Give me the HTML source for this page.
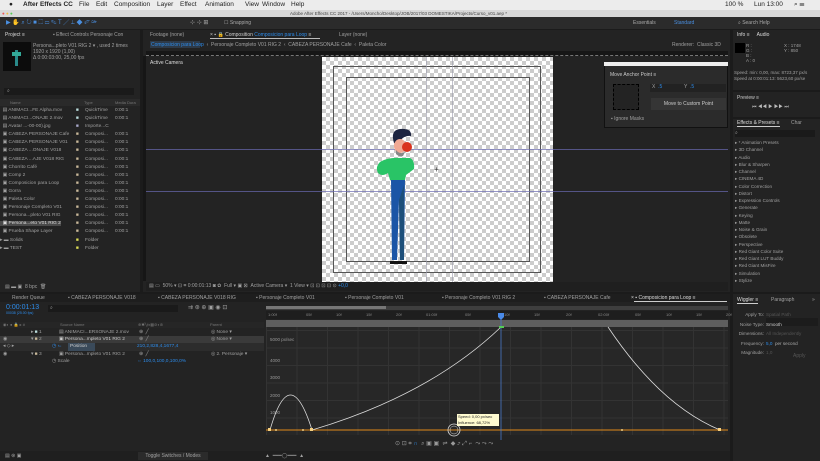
<!DOCTYPE html>
<html><head><meta charset="utf-8"><style>
*{margin:0;padding:0;box-sizing:border-box}
body{width:820px;height:461px;overflow:hidden;background:#1b1b1b;font-family:"Liberation Sans",sans-serif;font-size:5px;color:#a0a0a0;position:relative}
.a{position:absolute;white-space:nowrap}
.p{position:absolute;background:#232323}
.blue{color:#2d8ceb}
.chk{background-color:#fff;background-image:linear-gradient(45deg,#ccc 25%,transparent 25%,transparent 75%,#ccc 75%),linear-gradient(45deg,#ccc 25%,transparent 25%,transparent 75%,#ccc 75%);background-size:8px 8px;background-position:0 0,4px 4px}
</style></head><body>
<div class="a" style="left:0;top:0;width:820px;height:10px;background:#ececec;color:#222;font-size:6.5px;line-height:10px">
<span class="a" style="left:9px">●</span><span class="a" style="left:23px;font-weight:bold">After Effects CC</span>
<span class="a" style="left:79px">File</span><span class="a" style="left:96px">Edit</span><span class="a" style="left:114px">Composition</span><span class="a" style="left:157px">Layer</span><span class="a" style="left:180px">Effect</span><span class="a" style="left:205px">Animation</span><span class="a" style="left:245px">View</span><span class="a" style="left:262px">Window</span><span class="a" style="left:291px">Help</span>
<span class="a" style="left:725px">100 %</span><span class="a" style="left:754px">Lun 13:00</span><span class="a" style="left:794px">⌕ ☰</span></div>
<div class="a" style="left:0;top:10px;width:820px;height:7px;background:#d8d8d8;color:#444;font-size:4.5px;line-height:7px"><span class="a" style="left:2px;color:#e55">● <span style="color:#eb4">●</span> <span style="color:#5c5">●</span></span><span class="a" style="left:290px">Adobe After Effects CC 2017 - /Users/Moncho/Desktop/JOB/2017/03 DOMESTIKA/Projects/Curso_v01.aep *</span></div>
<div class="a" style="left:0;top:17px;width:820px;height:12px;background:#2b2b2b;line-height:12px;font-size:6px;color:#aaa">
<span class="a" style="left:6px;color:#4a8fe0">▶ ✋ ⌕ ↻ ■ ⬚ ▭ ✎ T ╱ ⊥ ◆ ✐ ✑</span><span class="a" style="left:190px">⊹ ⊹ ⊞</span><span class="a" style="left:224px;font-size:5px">☐ Snapping</span>
<span class="a" style="left:633px;font-size:5px">Essentials</span><span class="a" style="left:674px;font-size:5px;color:#4a8fe0">Standard</span><span class="a" style="left:738px;font-size:5px">⌕ Search Help</span></div>
<div class="p" style="left:0;top:30px;width:140px;height:262px"></div>
<div class="a" style="left:5px;top:32px;color:#ddd">Project ≡</div><div class="a" style="left:53px;top:32px">▪ Effect Controls Personaje Con</div>
<div class="a" style="left:3px;top:42px;width:28px;height:29px;background:#0c0c0c"><div class="a" style="left:12px;top:8px;width:3px;height:16px;background:#2a8a8a"></div><div class="a" style="left:9px;top:10px;width:9px;height:4px;background:#3a9"></div></div>
<div class="a" style="left:33px;top:43px;line-height:6px">Persona...pleto V01 RIG 2 ▾ , used 2 times<br>1920 x 1920 (1,00)<br>Δ 0:00:03:00, 25,00 fps</div>
<div class="a" style="left:4px;top:88px;width:130px;height:7px;background:#1a1a1a;padding-left:3px">⌕</div>
<div class="a" style="left:0;top:99px;width:140px;height:7px;background:#2a2a2a;font-size:4px;line-height:7px;color:#777"><span class="a" style="left:10px">Name</span><span class="a" style="left:84px">Type</span><span class="a" style="left:115px">Media Dura</span></div>
<div class="a" style="left:0;top:107px;line-height:8.1px;font-size:4.8px;width:140px">
<div style="position:relative;height:8.1px">&nbsp;&nbsp;▤ ANIMACI...FE Alpha.mov <span class="a" style="left:76px;color:#bdd">■</span><span class="a" style="left:85px">QuickTime</span><span class="a" style="left:115px">0:00:1</span></div>
<div style="position:relative;height:8.1px">&nbsp;&nbsp;▤ ANIMACI...ONAJE 2.mov <span class="a" style="left:76px;color:#bdd">■</span><span class="a" style="left:85px">QuickTime</span><span class="a" style="left:115px">0:00:1</span></div>
<div style="position:relative;height:8.1px">&nbsp;&nbsp;▤ Avatar ...-00-00).jpg <span class="a" style="left:76px;color:#aac">■</span><span class="a" style="left:85px">Importe...C</span></div>
<div style="position:relative;height:8.1px">&nbsp;&nbsp;▣ CABEZA PERSONAJE Cafe <span class="a" style="left:76px;color:#c9b99a">■</span><span class="a" style="left:85px">Composi...</span><span class="a" style="left:115px">0:00:1</span></div>
<div style="position:relative;height:8.1px">&nbsp;&nbsp;▣ CABEZA PERSONAJE V01 <span class="a" style="left:76px;color:#c9b99a">■</span><span class="a" style="left:85px">Composi...</span><span class="a" style="left:115px">0:00:1</span></div>
<div style="position:relative;height:8.1px">&nbsp;&nbsp;▣ CABEZA ...ONAJE V018 <span class="a" style="left:76px;color:#c9b99a">■</span><span class="a" style="left:85px">Composi...</span><span class="a" style="left:115px">0:00:1</span></div>
<div style="position:relative;height:8.1px">&nbsp;&nbsp;▣ CABEZA ...AJE V018 RIG <span class="a" style="left:76px;color:#c9b99a">■</span><span class="a" style="left:85px">Composi...</span><span class="a" style="left:115px">0:00:1</span></div>
<div style="position:relative;height:8.1px">&nbsp;&nbsp;▣ Chorrito Café <span class="a" style="left:76px;color:#c9b99a">■</span><span class="a" style="left:85px">Composi...</span><span class="a" style="left:115px">0:00:1</span></div>
<div style="position:relative;height:8.1px">&nbsp;&nbsp;▣ Comp 2 <span class="a" style="left:76px;color:#c9b99a">■</span><span class="a" style="left:85px">Composi...</span><span class="a" style="left:115px">0:00:1</span></div>
<div style="position:relative;height:8.1px">&nbsp;&nbsp;▣ Composicion para Loop <span class="a" style="left:76px;color:#c9b99a">■</span><span class="a" style="left:85px">Composi...</span><span class="a" style="left:115px">0:00:1</span></div>
<div style="position:relative;height:8.1px">&nbsp;&nbsp;▣ Gorra <span class="a" style="left:76px;color:#c9b99a">■</span><span class="a" style="left:85px">Composi...</span><span class="a" style="left:115px">0:00:1</span></div>
<div style="position:relative;height:8.1px">&nbsp;&nbsp;▣ Paleta Color <span class="a" style="left:76px;color:#c9b99a">■</span><span class="a" style="left:85px">Composi...</span><span class="a" style="left:115px">0:00:1</span></div>
<div style="position:relative;height:8.1px">&nbsp;&nbsp;▣ Personaje Completo V01 <span class="a" style="left:76px;color:#c9b99a">■</span><span class="a" style="left:85px">Composi...</span><span class="a" style="left:115px">0:00:1</span></div>
<div style="position:relative;height:8.1px">&nbsp;&nbsp;▣ Persona...pleto V01 RIG <span class="a" style="left:76px;color:#c9b99a">■</span><span class="a" style="left:85px">Composi...</span><span class="a" style="left:115px">0:00:1</span></div>
<div style="position:relative;height:8.1px"><span style="background:#4a4a4a;color:#ddd">&nbsp;&nbsp;▣ Persona...eto V01 RIG 2</span><span class="a" style="left:76px;color:#c9b99a">■</span><span class="a" style="left:85px">Composi...</span><span class="a" style="left:115px">0:00:1</span></div>
<div style="position:relative;height:8.1px">&nbsp;&nbsp;▣ Prueba Shape Layer <span class="a" style="left:76px;color:#c9b99a">■</span><span class="a" style="left:85px">Composi...</span><span class="a" style="left:115px">0:00:1</span></div>
<div style="position:relative;height:8.1px">▸ ▬ Solids <span class="a" style="left:76px;color:#dd5">■</span><span class="a" style="left:85px">Folder</span></div>
<div style="position:relative;height:8.1px">▸ ▬ TEST <span class="a" style="left:76px;color:#dd5">■</span><span class="a" style="left:85px">Folder</span></div>
</div>
<div class="a" style="left:5px;top:284px">▤ ▬ ▣ &nbsp;8 bpc &nbsp;🗑</div>
<div class="p" style="left:143px;top:30px;width:587px;height:262px"></div>
<div class="a" style="left:150px;top:32px">Footage (none)</div>
<div class="a" style="left:210px;top:32px;color:#ccc">× ▪ 🔒 Composition <span class="blue">Composicion para Loop</span> ≡</div>
<div class="a" style="left:210px;top:38px;width:110px;height:1px;background:#bbb"></div>
<div class="a" style="left:339px;top:32px">Layer (none)</div>
<div class="a" style="left:150px;top:41px;width:50px;height:7px;background:#2e3a48"></div>
<div class="a" style="left:151px;top:42px"><span class="blue">Composicion para Loop</span> &nbsp;‹ &nbsp;Personaje Completo V01 RIG 2 &nbsp;‹ &nbsp;CABEZA PERSONAJE Cafe &nbsp;‹ &nbsp;Paleta Color</div>
<div class="a" style="left:672px;top:42px">Renderer: &nbsp;Classic 3D</div>
<div class="a" style="left:146px;top:51px;width:582px;height:5px;background:#161616;border-bottom:1px dashed #777"></div>
<div class="a" style="left:143px;top:56px;width:3px;height:225px;background:#161616"></div>
<div class="a" style="left:150px;top:60px;color:#ddd">Active Camera</div>
<div class="a chk" style="left:322px;top:57px;width:231px;height:225px"></div>
<div class="a" style="left:333px;top:66px;width:208px;height:207px;border:1px solid #555"></div>
<div class="a" style="left:346px;top:77px;width:184px;height:185px;border:1px solid #555"></div>
<div class="a" style="left:146px;top:149px;width:582px;height:1px;background:#6a6ab0;opacity:.7"></div>
<div class="a" style="left:146px;top:191px;width:582px;height:1px;background:#6a6ab0;opacity:.7"></div>
<div class="a" style="left:426px;top:57px;width:1px;height:225px;background:#99a;opacity:.6"></div>
<div class="a" style="left:452px;top:57px;width:1px;height:225px;background:#99a;opacity:.6"></div>
<div class="a" style="left:434px;top:165px;color:#333;font-size:8px">+</div>
<svg class="a" style="left:370px;top:125px" width="50" height="145" viewBox="0 0 50 145">
<path d="M24 18 Q20 5 30 4 Q42 3 41 11 Q32 10 28 20 Z" fill="#1d2440"/>
<ellipse cx="30" cy="21" rx="6" ry="7" fill="#f0a994"/>
<path d="M26 25 Q30 30 35 27 L33 31 Q29 32 26 29Z" fill="#888"/>
<circle cx="37" cy="22" r="5" fill="#d9331e"/>
<path d="M10 37 Q18 32 30 33 L40 33 Q45 35 44 44 L36 50 L35 55 L20 55 L18 48 Q12 52 8 48 Q5 42 10 37Z" fill="#29c466"/>
<path d="M21 55 L35 55 L34 135 L30 135 L29 75 L27 135 L22 135Z" fill="#1b55a6"/>
<path d="M29 75 L34 60 L34 135 L30 135Z" fill="#1d4f7a"/>
<rect x="20" y="136" width="17" height="3" fill="#111"/>
</svg>
<div class="a" style="left:146px;top:282px;width:582px;height:9px;background:#1f1f1f;line-height:9px"><span class="a" style="left:3px">▤ ▭ &nbsp;50% ▾ ⊡ ⌗ 0:00:01:13 ◙ ✿ &nbsp;Full ▾ ▣ ⊠ &nbsp;Active Camera ▾ &nbsp;1 View ▾ ⊡ ⊡ ⊡ ⊡ ⊙ <span class="blue">+0,0</span></span></div>
<div class="a" style="left:604px;top:62px;width:124px;height:66px;background:#2b2b2b;border:1px solid #111"></div>
<div class="a" style="left:604px;top:62px;width:124px;height:4px;background:#eee"></div>
<div class="a" style="left:610px;top:72px;color:#ccc">Move Anchor Point ≡</div>
<div class="a" style="left:613px;top:84px;width:26px;height:26px;border:1px dashed #000;background:#232323"></div>
<div class="a" style="left:650px;top:84px;width:76px;height:8px;background:#222;padding-left:2px">X &nbsp;<span class="blue">.5</span><span class="a" style="left:34px">Y &nbsp;<span class="blue">.5</span></span></div>
<div class="a" style="left:651px;top:98px;width:75px;height:12px;background:#353535;line-height:12px;text-align:center;color:#ccc">Move to Custom Point</div>
<div class="a" style="left:611px;top:116px">▪ Ignore Masks</div>
<div class="p" style="left:733px;top:30px;width:87px;height:60px"></div>
<div class="a" style="left:737px;top:32px;color:#ddd">Info ≡ &nbsp;&nbsp;&nbsp;&nbsp;Audio</div>
<div class="a" style="left:735px;top:43px;width:10px;height:10px;background:#000"></div>
<div class="a" style="left:746px;top:43px;line-height:5px;font-size:4.5px">R :<br>G :<br>B :<br>A : 0</div>
<div class="a" style="left:784px;top:43px;line-height:5px;font-size:4.5px">X : 1748<br>Y : 850</div>
<div class="a" style="left:734px;top:70px;line-height:6px;font-size:4.5px">Speed: min: 0,00, max: 8723,37 px/s<br>Speed at 0:00:01:13: 5623,60 px/se</div>
<div class="p" style="left:733px;top:92px;width:87px;height:25px"></div>
<div class="a" style="left:737px;top:95px;color:#ccc">Preview ≡</div>
<div class="a" style="left:752px;top:104px;font-size:5px;color:#bbb">⏮ ◀◀ ▶ ▶▶ ⏭</div>
<div class="p" style="left:733px;top:119px;width:87px;height:173px"></div>
<div class="a" style="left:737px;top:120px;color:#ddd;border-bottom:1px solid #ccc">Effects &amp; Presets ≡</div><div class="a" style="left:791px;top:120px">Char</div>
<div class="a" style="left:735px;top:130px;width:80px;height:7px;background:#1a1a1a">⌕</div>
<div class="a" style="left:735px;top:139px;line-height:7.25px;font-size:4.6px">▸ * Animation Presets<br>▸ 3D Channel<br>▸ Audio<br>▸ Blur &amp; Sharpen<br>▸ Channel<br>▸ CINEMA 4D<br>▸ Color Correction<br>▸ Distort<br>▸ Expression Controls<br>▸ Generate<br>▸ Keying<br>▸ Matte<br>▸ Noise &amp; Grain<br>▸ Obsolete<br>▸ Perspective<br>▸ Red Giant Color Suite<br>▸ Red Giant LUT Buddy<br>▸ Red Giant MisFire<br>▸ Simulation<br>▸ Stylize</div>
<div class="p" style="left:0;top:294px;width:730px;height:167px"></div>
<div class="a" style="left:0;top:294px;width:730px;height:8px;background:#1e1e1e;line-height:8px"><span class="a" style="left:12px">Render Queue</span><span class="a" style="left:68px">▪ CABEZA PERSONAJE V018</span><span class="a" style="left:158px">▪ CABEZA PERSONAJE V018 RIG</span><span class="a" style="left:256px">▪ Personaje Completo V01</span><span class="a" style="left:345px">▪ Personaje Completo V01</span><span class="a" style="left:442px">▪ Personaje Completo V01 RIG 2</span><span class="a" style="left:544px">▪ CABEZA PERSONAJE Cafe</span><span class="a" style="left:631px;color:#ddd">× ▪ Composicion para Loop ≡</span></div>
<div class="a" style="left:634px;top:301px;width:93px;height:1px;background:#ccc"></div>
<div class="a" style="left:6px;top:304px;color:#2d8ceb;font-size:7px">0:00:01:13</div>
<div class="a" style="left:6px;top:311px;color:#2d8ceb;font-size:3.5px">00038 (25.00 fps)</div>
<div class="a" style="left:48px;top:305px;width:130px;height:7px;background:#1a1a1a;padding-left:2px">⌕</div>
<div class="a" style="left:188px;top:304px;font-size:6px">⇉ ⊛ ⊕ ▣ ◉ ⊡</div>
<div class="a" style="left:0;top:322px;width:264px;height:6px;background:#262626;font-size:4px;line-height:6px;color:#777"><span class="a" style="left:3px">◉◐ ● 🔒 ▸ #</span><span class="a" style="left:60px">Source Name</span><span class="a" style="left:138px">⊕✱╲fx▦⊘◐⊛</span><span class="a" style="left:210px">Parent</span></div>
<div class="a" style="left:0;top:329px;width:264px;line-height:7.2px;font-size:4.8px">
<div style="position:relative;height:7.2px"><span class="a" style="left:31px">▸ <span style="color:#bdd">■</span> 1</span><span class="a" style="left:59px">▤ ANIMACI...ERSONAJE 2.mov</span><span class="a" style="left:139px">⊕ &nbsp;╱</span><span class="a" style="left:211px">◎ None ▾</span></div>
<div style="position:relative;height:7.2px;background:#3a3a3a"><span class="a" style="left:3px">◉</span><span class="a" style="left:31px">▾ <span style="color:#c9b99a">■</span> 2</span><span class="a" style="left:59px;color:#ccc">▣ Persona...mpleto V01 RIG 2</span><span class="a" style="left:139px">⊕ &nbsp;╱</span><span class="a" style="left:211px">◎ None ▾</span></div>
<div style="position:relative;height:7.2px;background:#2c2c2c"><span class="a" style="left:3px">◂ ◇ ▸</span><span class="a" style="left:52px;color:#2d8ceb">◷ ⌙</span><span class="a" style="left:68px;background:#3a4a5a;color:#ccc;padding:0 8px 0 2px">Position</span><span class="a" style="left:137px;color:#2d8ceb">210,2,828,4,1677,4</span></div>
<div style="position:relative;height:7.2px"><span class="a" style="left:3px">◉</span><span class="a" style="left:31px">▾ <span style="color:#c9b99a">■</span> 3</span><span class="a" style="left:59px">▣ Persona...mpleto V01 RIG 2</span><span class="a" style="left:139px">⊕ &nbsp;╱</span><span class="a" style="left:211px">◎ 2. Personaje ▾</span></div>
<div style="position:relative;height:7.2px"><span class="a" style="left:52px">◷ Scale</span><span class="a" style="left:137px;color:#2d8ceb">⇔ 100,0,100,0,100,0%</span></div>
</div>
<div class="a" style="left:0;top:451px;width:730px;height:10px;background:#1f1f1f;line-height:10px"><span class="a" style="left:5px">▤ ⊛ ▣</span><span class="a" style="left:138px;width:70px;height:8px;top:1px;line-height:8px;background:#2b2b2b;text-align:center">Toggle Switches / Modes</span><span class="a" style="left:265px">▲ &nbsp;━━━◯━━━ &nbsp;▲</span></div>
<div class="a" style="left:266px;top:306px;width:462px;height:4px;background:#3e3e3e"></div>
<div class="a" style="left:266px;top:306px;width:120px;height:3px;background:#777"></div>
<div class="a" style="left:266px;top:311px;width:462px;height:8px;background:#1e1e1e;font-size:4px;line-height:8px;color:#888"><span class="a" style="left:2px">1:00f</span><span class="a" style="left:40px">05f</span><span class="a" style="left:70px">10f</span><span class="a" style="left:100px">15f</span><span class="a" style="left:130px">20f</span><span class="a" style="left:160px">01:00f</span><span class="a" style="left:199px">05f</span><span class="a" style="left:238px">10f</span><span class="a" style="left:268px">15f</span><span class="a" style="left:300px">20f</span><span class="a" style="left:332px">02:00f</span><span class="a" style="left:369px">05f</span><span class="a" style="left:400px">10f</span><span class="a" style="left:430px">15f</span><span class="a" style="left:460px">20f</span></div>
<div class="a" style="left:266px;top:320px;width:462px;height:7px;background:#5e5e5e"></div>
<div class="a" style="left:266px;top:327px;width:462px;height:108px;background:#272727;background-image:linear-gradient(#333 1px,transparent 1px),linear-gradient(90deg,#333 1px,transparent 1px);background-size:30.5px 17.5px;background-position:0 3px"></div>
<div class="a" style="left:270px;top:337px;font-size:4.5px;color:#999">5000 px/sec</div>
<div class="a" style="left:270px;top:358px;font-size:4.5px;color:#999">4000</div>
<div class="a" style="left:270px;top:375px;font-size:4.5px;color:#999">3000</div>
<div class="a" style="left:270px;top:393px;font-size:4.5px;color:#999">2000</div>
<div class="a" style="left:270px;top:410px;font-size:4.5px;color:#999">1000</div>
<svg class="a" style="left:266px;top:310px" width="464" height="130" viewBox="266 310 464 130">
<line x1="266" y1="430" x2="728" y2="430" stroke="#e08a1a" stroke-width="1"/>
<path d="M270 430 Q290 360 312 430" stroke="#ddd" fill="none" stroke-width="0.8"/>
<path d="M312 430 Q430 395 501 327" stroke="#ddd" fill="none" stroke-width="0.8"/>
<path d="M608 327 Q660 405 720 430" stroke="#ddd" fill="none" stroke-width="0.8"/>
<line x1="501" y1="314" x2="501" y2="445" stroke="#4a78c8" stroke-width="0.8"/>
<path d="M498 313 h6 v4 l-3 3 l-3 -3z" fill="#4a8ae8"/>
<rect x="268" y="428" width="3" height="3" fill="#f5d080"/>
<rect x="310" y="428" width="3" height="3" fill="#f5d080"/>
<rect x="718" y="428" width="3" height="3" fill="#f5d080"/>
<circle cx="276" cy="430" r="1" fill="#f5d080"/><circle cx="303" cy="430" r="1" fill="#f5d080"/><circle cx="622" cy="430" r="1" fill="#f5d080"/>
<circle cx="454" cy="430" r="6" stroke="#ddd" fill="none" stroke-width="0.8"/>
<circle cx="454" cy="430" r="4" stroke="#ddd" fill="none" stroke-width="0.5"/>
<rect x="499" y="326" width="5" height="2" fill="#5c5"/>
</svg>
<div class="a" style="left:457px;top:414px;width:42px;height:12px;background:#fffbd0;color:#222;font-size:4px;line-height:6px;padding-left:1px">Speed: 0,00 px/sec<br>Influence: 68,72%</div>
<div class="a" style="left:395px;top:440px;font-size:6px;color:#999">⊙ ⊡ ⌗ <span class="blue">∩</span> &nbsp;⌕ ▣ ▣ &nbsp;⇌ &nbsp;◆ ⤴ ⤢ ⌐ &nbsp;⤳ ⤳ ⤳</div>
<div class="p" style="left:733px;top:294px;width:87px;height:167px"></div>
<div class="a" style="left:737px;top:297px;color:#ddd;border-bottom:1px solid #ccc">Wiggler ≡</div><div class="a" style="left:771px;top:297px">Paragraph</div><div class="a" style="left:812px;top:297px">»</div>
<div class="a" style="left:734px;top:310px;width:31px;height:7px;background:#1c1c1c;z-index:0;display:none"></div>
<div class="a" style="left:766px;top:318px;width:52px;height:8px;background:#1c1c1c"></div>
<div class="a" style="left:733px;top:310px;line-height:9.5px;font-size:4.6px;text-align:right;width:31px">Apply To:<br>Noise Type:<br>Dimensions:<br>Frequency:<br>Magnitude:</div>
<div class="a" style="left:766px;top:310px;line-height:9.5px;font-size:4.6px;color:#555">Spatial Path<br><span style="color:#ccc">Smooth</span><br>All Independently<br><span class="blue">5,0</span> <span style="color:#aaa">&nbsp;per second</span><br>1,0</div>
<div class="a" style="left:793px;top:353px;color:#555">Apply</div>
</body></html>
